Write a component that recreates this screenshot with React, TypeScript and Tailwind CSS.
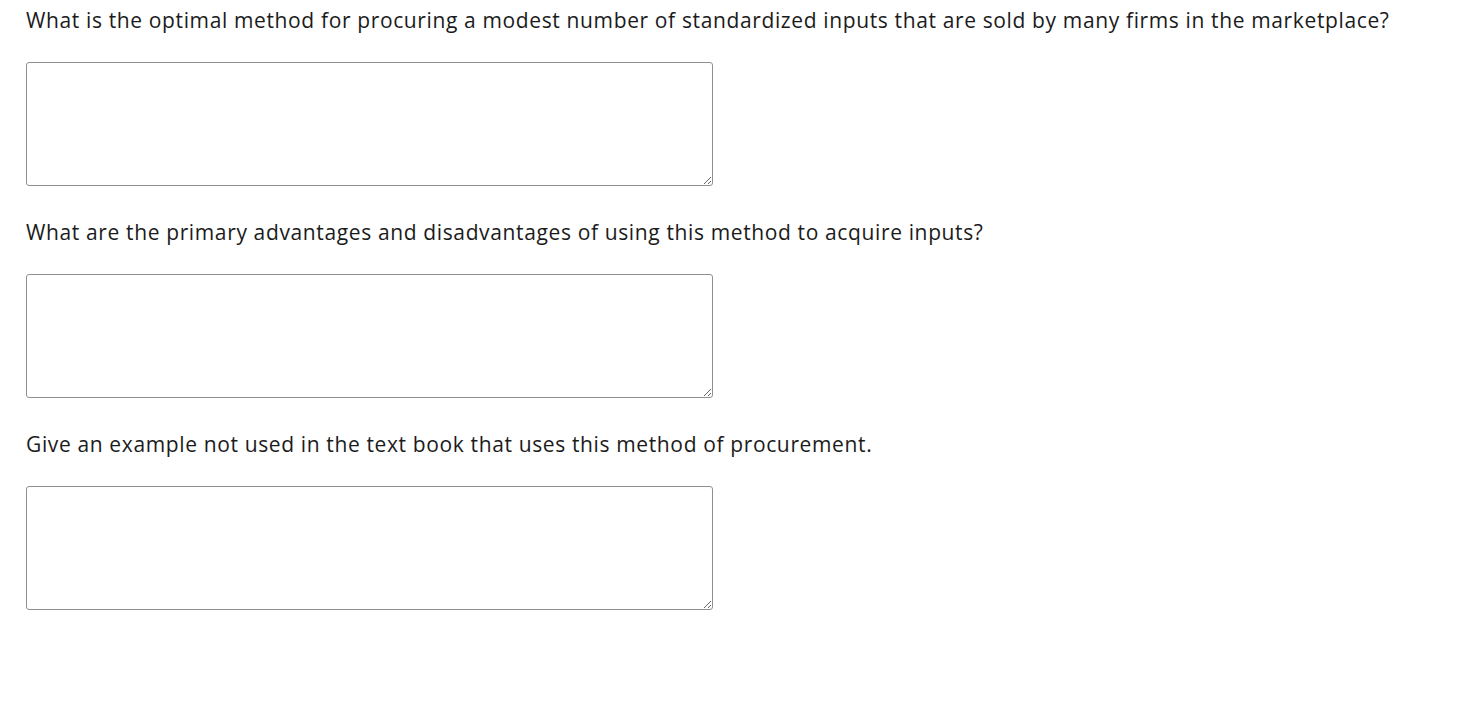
const questions = [
  'What is the optimal method for procuring a modest number of standardized inputs that are sold by many firms in the marketplace?',
  'What are the primary advantages and disadvantages of using this method to acquire inputs?',
  'Give an example not used in the text book that uses this method of procurement.',
];

export default function App() {
  return (
    <div className="min-h-screen bg-white pl-[26px] pt-[8px] font-['Open_Sans',sans-serif] text-[#1b1b1b]">
      {questions.map((q) => (
        <div key={q} className="mb-[34px]">
          <p className="h-[24px] text-[21px] leading-[24px] tracking-[0.63px]">{q}</p>
          <textarea className="mt-[30px] block h-[124px] w-[687px] rounded-[3px] border border-[#8f8f8f] bg-white" />
        </div>
      ))}
    </div>
  );
}
